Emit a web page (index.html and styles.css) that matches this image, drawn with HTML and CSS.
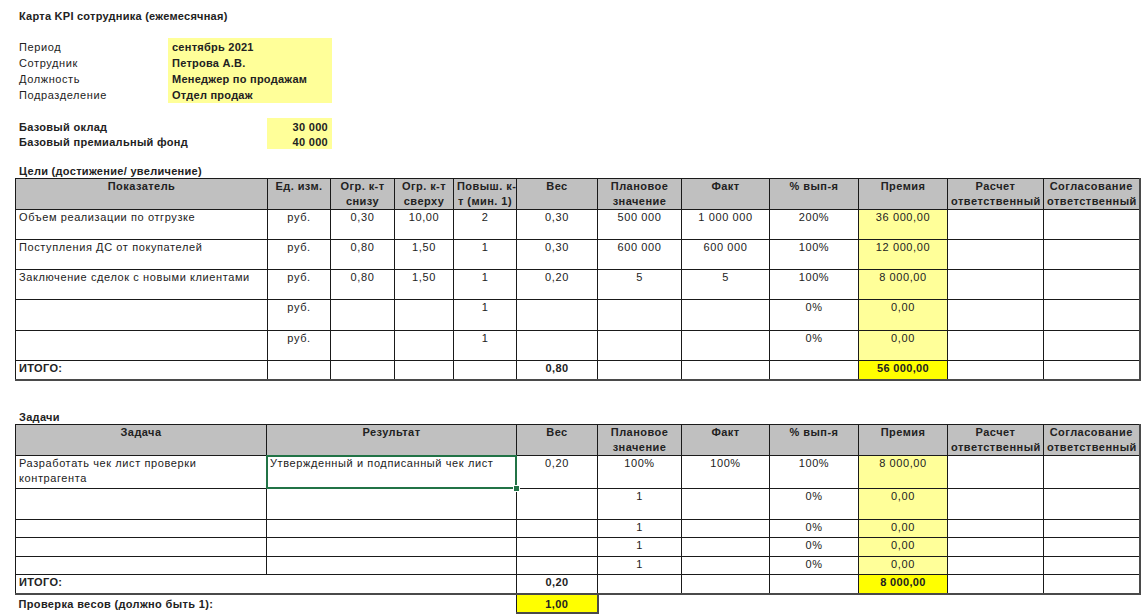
FILE: index.html
```html
<!DOCTYPE html>
<html lang="ru">
<head>
<meta charset="utf-8">
<title>Карта KPI сотрудника</title>
<link rel="stylesheet" href="styles.css">
</head>
<body>
<div class="sheet">
  <div class="title">Карта KPI сотрудника (ежемесячная)</div>

  <div class="info">
    <div class="info-labels">
      <div>Период</div>
      <div>Сотрудник</div>
      <div>Должность</div>
      <div>Подразделение</div>
    </div>
    <div class="info-values">
      <div>сентябрь 2021</div>
      <div>Петрова А.В.</div>
      <div>Менеджер по продажам</div>
      <div>Отдел продаж</div>
    </div>
  </div>

  <div class="base">
    <div class="base-labels">
      <div>Базовый оклад</div>
      <div>Базовый премиальный фонд</div>
    </div>
    <div class="base-values">
      <div>30 000</div>
      <div>40 000</div>
    </div>
  </div>

  <div class="section-label goals-label">Цели (достижение/ увеличение)</div>
  <table class="grid goals">
    <colgroup>
      <col style="width:252px"><col style="width:63px"><col style="width:64px"><col style="width:59px"><col style="width:63px"><col style="width:81px"><col style="width:84px"><col style="width:88px"><col style="width:89px"><col style="width:89px"><col style="width:96px"><col style="width:96px">
    </colgroup>
    <tr class="head">
      <th>Показатель</th><th>Ед. изм.</th><th>Огр. к-т<br>снизу</th><th>Огр. к-т<br>сверху</th><th>Повыш. к-<br>т (мин. 1)</th><th>Вес</th><th>Плановое<br>значение</th><th>Факт</th><th>% вып-я</th><th>Премия</th><th class="small">Расчет<br>ответственный</th><th class="small last">Согласование<br>ответственный</th>
    </tr>
    <tr class="row">
      <td class="left">Объем реализации по отгрузке</td><td>руб.</td><td>0,30</td><td>10,00</td><td>2</td><td>0,30</td><td>500 000</td><td>1 000 000</td><td>200%</td><td class="prem">36 000,00</td><td></td><td class="last"></td>
    </tr>
    <tr class="row">
      <td class="left">Поступления ДС от покупателей</td><td>руб.</td><td>0,80</td><td>1,50</td><td>1</td><td>0,30</td><td>600 000</td><td>600 000</td><td>100%</td><td class="prem">12 000,00</td><td></td><td class="last"></td>
    </tr>
    <tr class="row">
      <td class="left">Заключение сделок с новыми клиентами</td><td>руб.</td><td>0,80</td><td>1,50</td><td>1</td><td>0,20</td><td>5</td><td>5</td><td>100%</td><td class="prem">8 000,00</td><td></td><td class="last"></td>
    </tr>
    <tr class="row row-tall">
      <td class="left"></td><td>руб.</td><td></td><td></td><td>1</td><td></td><td></td><td></td><td>0%</td><td class="prem">0,00</td><td></td><td class="last"></td>
    </tr>
    <tr class="row">
      <td class="left"></td><td>руб.</td><td></td><td></td><td>1</td><td></td><td></td><td></td><td>0%</td><td class="prem">0,00</td><td></td><td class="last"></td>
    </tr>
    <tr class="total">
      <td class="left bold">ИТОГО:</td><td></td><td></td><td></td><td></td><td class="bold">0,80</td><td></td><td></td><td></td><td class="prem-total bold">56 000,00</td><td></td><td class="last"></td>
    </tr>
  </table>

  <div class="section-label tasks-label">Задачи</div>
  <table class="grid tasks">
    <colgroup>
      <col style="width:251px"><col style="width:250px"><col style="width:81px"><col style="width:84px"><col style="width:88px"><col style="width:89px"><col style="width:89px"><col style="width:96px"><col style="width:96px">
    </colgroup>
    <tr class="head">
      <th>Задача</th><th>Результат</th><th>Вес</th><th>Плановое<br>значение</th><th>Факт</th><th>% вып-я</th><th>Премия</th><th class="small">Расчет<br>ответственный</th><th class="small last">Согласование<br>ответственный</th>
    </tr>
    <tr class="row row-task">
      <td class="left">Разработать чек лист проверки<br>контрагента</td>
      <td class="left selected">Утвержденный и подписанный чек лист<span class="sel-frame"></span><span class="sel-handle"></span></td>
      <td>0,20</td><td>100%</td><td>100%</td><td>100%</td><td class="prem">8 000,00</td><td></td><td class="last"></td>
    </tr>
    <tr class="row row-task2">
      <td class="left"></td><td class="left"></td><td></td><td>1</td><td></td><td>0%</td><td class="prem">0,00</td><td></td><td class="last"></td>
    </tr>
    <tr class="row-short">
      <td class="left"></td><td class="left"></td><td></td><td>1</td><td></td><td>0%</td><td class="prem">0,00</td><td></td><td class="last"></td>
    </tr>
    <tr class="row-short">
      <td class="left"></td><td class="left"></td><td></td><td>1</td><td></td><td>0%</td><td class="prem">0,00</td><td></td><td class="last"></td>
    </tr>
    <tr class="row-short">
      <td class="left"></td><td class="left"></td><td></td><td>1</td><td></td><td>0%</td><td class="prem">0,00</td><td></td><td class="last"></td>
    </tr>
    <tr class="total">
      <td class="left bold" colspan="2">ИТОГО:</td><td class="bold">0,20</td><td></td><td></td><td></td><td class="prem-total bold">8 000,00</td><td></td><td class="last"></td>
    </tr>
    <tr class="check">
      <td class="left bold plain" colspan="2">Проверка весов (должно быть 1):</td><td class="check-cell bold">1,00</td><td class="plain" colspan="6"></td>
    </tr>
  </table>
</div>
</body>
</html>
```

FILE: styles.css
```css
* { box-sizing: border-box; }

html, body {
  margin: 0;
  padding: 0;
  background: #ffffff;
}

body {
  font-family: "Liberation Sans", Arial, sans-serif;
  font-size: 11px;
  color: #222222;
  letter-spacing: 0.6px;
}

.sheet {
  padding: 9px 0 0 15px;
  width: 1147px;
}

.title {
  font-weight: bold;
  line-height: 15px;
  padding-left: 4px;
  letter-spacing: 0.25px;
}

.info {
  display: flex;
  margin-top: 14px;
}

.info-labels {
  width: 153px;
  height: 65px;
  padding: 1px 0 0 4px;
  display: grid;
  grid-auto-rows: 16px;
  line-height: 16px;
}

.info-values {
  width: 164px;
  height: 65px;
  background: #ffff99;
  padding: 1px 0 0 4px;
  display: grid;
  grid-auto-rows: 16px;
  line-height: 16px;
  font-weight: bold;
  letter-spacing: 0.25px;
}

.base {
  display: flex;
  margin-top: 15px;
  font-weight: bold;
  letter-spacing: 0.3px;
}

.base-labels {
  width: 252px;
  height: 31px;
  padding: 2px 0 0 4px;
  display: grid;
  grid-auto-rows: 15px;
  line-height: 15px;
}

.base-values {
  width: 65px;
  height: 31px;
  background: #ffff99;
  padding: 2px 4px 0 0;
  text-align: right;
  display: grid;
  grid-auto-rows: 15px;
  line-height: 15px;
}

.section-label {
  font-weight: bold;
  line-height: 13px;
  height: 13px;
  padding-left: 4px;
  letter-spacing: 0.3px;
}

.goals-label { margin-top: 16px; }
.tasks-label { margin-top: 30px; }

.grid {
  border-collapse: collapse;
  table-layout: fixed;
  width: 1124px;
}

.grid th,
.grid td {
  border: 1px solid #1a1a1a;
  padding: 0 3px;
  vertical-align: top;
  text-align: center;
  line-height: 15px;
  overflow: visible;
  white-space: nowrap;
}

.grid th {
  background: #c0c0c0;
  font-weight: bold;
  letter-spacing: 0.45px;
}

.grid th.small { letter-spacing: 0.5px; }

.grid .left { text-align: left; }
.grid td.bold { font-weight: bold; letter-spacing: 0.35px; }

.grid .last { border-right: 2px solid #4a4a4a; }

.grid tr.head { height: 29px; }
.grid tr.row { height: 30px; }
.grid tr.row-tall { height: 31px; }
.grid tr.total { height: 19px; }
.grid tr.total td { border-bottom: 2px solid #4a4a4a; }

.grid td.prem { background: #ffff99; }
.grid td.prem-total { background: #ffff00; }

.tasks tr.head { height: 28px; }
.tasks tr.row-task { height: 33px; }
.tasks tr.row-task2 { height: 31px; }
.tasks tr.row-short { height: 18.5px; }
.tasks tr.check { height: 19px; }

.tasks td.plain {
  border: none;
  padding-top: 2px;
}

.tasks td.check-cell {
  background: #ffff00;
  border: 1px solid #1a1a1a;
  border-bottom: 2px solid #4a4a4a;
  border-right: 2px solid #4a4a4a;
  padding-top: 2px;
}

.grid td.selected { position: relative; }

.sel-frame {
  position: absolute;
  left: -1px;
  top: -1px;
  right: -1px;
  bottom: -1px;
  border: 2px solid #217346;
  pointer-events: none;
}

.sel-handle {
  position: absolute;
  right: -4px;
  bottom: -4px;
  width: 7px;
  height: 7px;
  background: #217346;
  border: 1px solid #ffffff;
}
```
